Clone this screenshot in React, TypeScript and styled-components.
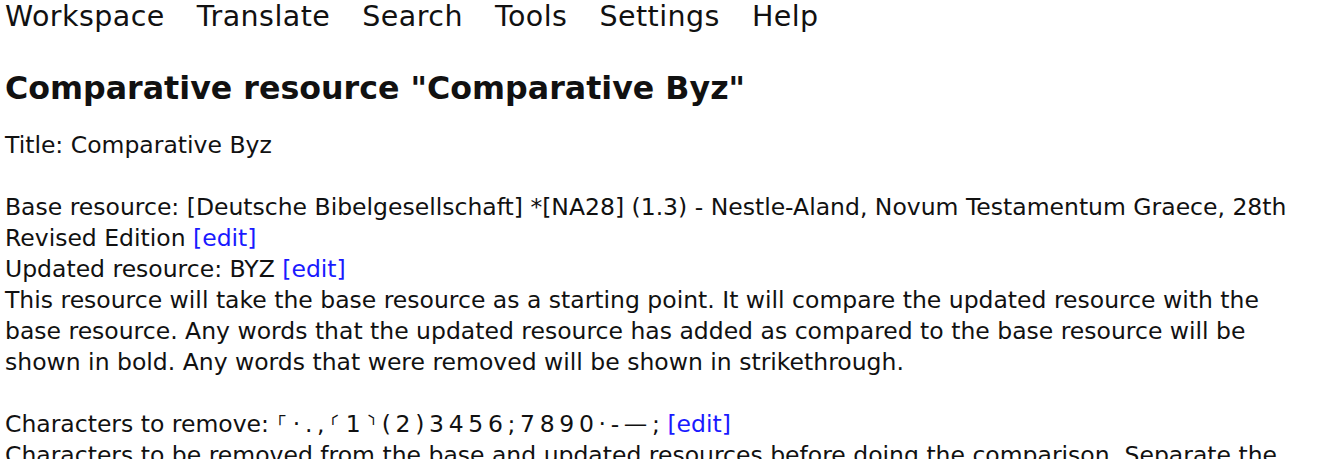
import React from "react";
import styled, { createGlobalStyle } from "styled-components";

const Global = createGlobalStyle`
  html, body { margin: 0; padding: 0; background: #fff; overflow: hidden; }
  body { font-family: "DejaVu Sans", "Noto Sans", sans-serif; color: #111; }
`;

const Page = styled.div`
  padding: 0 5px;
  max-width: 1295px;
`;

const Menu = styled.nav`
  display: flex;
  gap: 32px;
  height: 34px;
  align-items: center;
  font-size: 28.5px;
  line-height: 34px;
  letter-spacing: 0.45px;
`;

const MenuItem = styled.span`
  color: #111;
  cursor: pointer;
`;

const Heading = styled.h1`
  margin: 34px 0 0;
  font-size: 31.7px;
  line-height: 40px;
  font-weight: 600;
`;

const Body = styled.div`
  margin-top: 22px;
  font-size: 23.5px;
  line-height: 31px;
`;

const Line = styled.div<{ $gap?: boolean }>`
  margin-top: ${(p) => (p.$gap ? "31px" : "0")};
`;

const Glyphs = styled.span`
  word-spacing: -2.8px;
`;

const Edit = styled.a`
  color: #1a1aff;
  text-decoration: none;
  cursor: pointer;
`;

const menu = ["Workspace", "Translate", "Search", "Tools", "Settings", "Help"];

export default function App() {
  return (
    <Page>
      <Global />
      <Menu>
        {menu.map((m) => (
          <MenuItem key={m}>{m}</MenuItem>
        ))}
      </Menu>
      <Heading>Comparative resource "Comparative Byz"</Heading>
      <Body>
        <Line>Title: Comparative Byz</Line>
        <Line $gap>
          Base resource: [Deutsche Bibelgesellschaft] *[NA28] (1.3) - Nestle-Aland, Novum Testamentum Graece, 28th
          Revised Edition <Edit>[edit]</Edit>
        </Line>
        <Line>
          Updated resource: BYZ <Edit>[edit]</Edit>
        </Line>
        <Line>
          This resource will take the base resource as a starting point. It will compare the updated resource with the
          base resource. Any words that the updated resource has added as compared to the base resource will be shown in
          bold. Any words that were removed will be shown in strikethrough.
        </Line>
        <Line $gap>
          Characters to remove: <Glyphs>⸀ · . , ⸂ 1 ⸃ ( 2 ) 3 4 5 6 ; 7 8 9 0 · - — ;</Glyphs> <Edit>[edit]</Edit>
        </Line>
        <Line>
          Characters to be removed from the base and updated resources before doing the comparison. Separate the
          characters with spaces.
        </Line>
      </Body>
    </Page>
  );
}
